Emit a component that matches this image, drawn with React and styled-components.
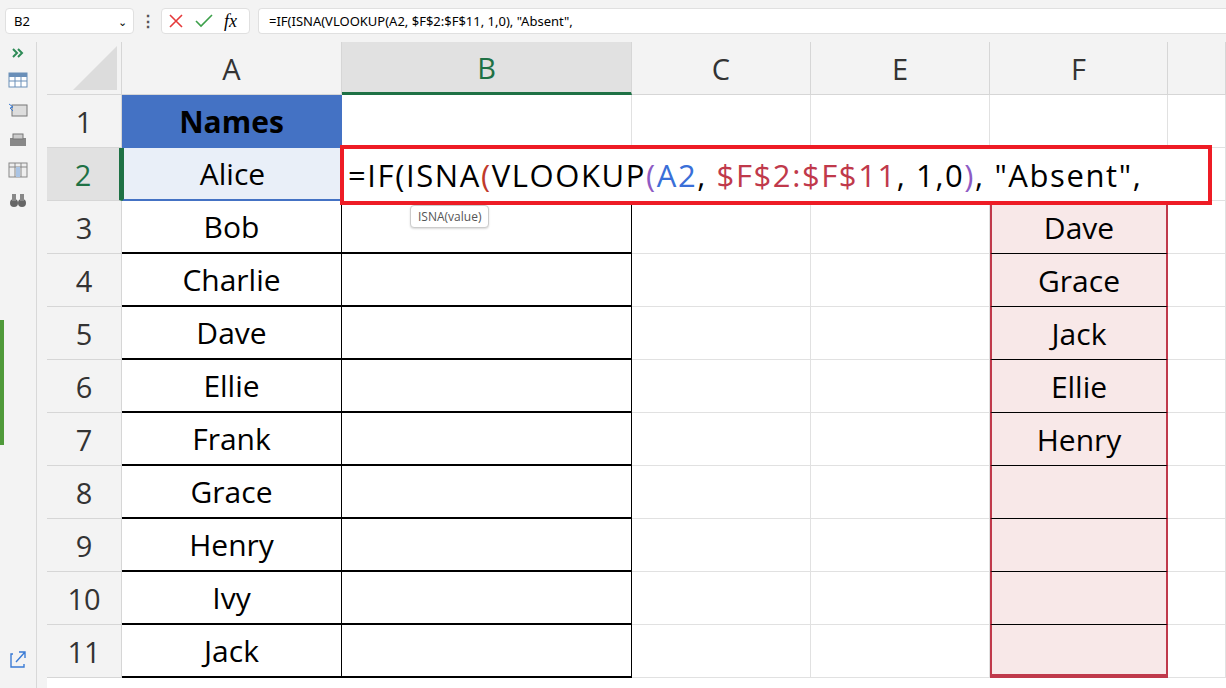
import React from "react";
import styled, { createGlobalStyle } from "styled-components";

const G = createGlobalStyle`
  body{margin:0;background:#fff;font-family:"Noto Sans","Open Sans",sans-serif;overflow:hidden;}
`;
const Page = styled.div`width:1226px;height:688px;display:flex;flex-direction:column;background:#f3f3f3;`;
const Bar = styled.div`height:42px;display:flex;align-items:center;gap:0;padding:0 0 0 5px;box-sizing:border-box;`;
const NameBox = styled.div`width:129px;height:26px;background:#fff;border:1px solid #e0e0e0;border-radius:4px;box-sizing:border-box;display:flex;align-items:center;justify-content:space-between;padding:0 6px 0 8px;font-size:13px;`;
const Dots = styled.div`width:27px;text-align:center;color:#555;font-size:16px;font-weight:bold;`;
const FxBox = styled.div`width:89px;height:26px;background:#fff;border:1px solid #e0e0e0;border-radius:4px;box-sizing:border-box;display:flex;align-items:center;gap:10px;padding:0 6px;`;
const Input = styled.div`flex:1;margin-left:8px;height:26px;background:#fff;border:1px solid #e0e0e0;border-right:none;border-radius:4px 0 0 4px;box-sizing:border-box;display:flex;align-items:center;padding-left:10px;font-size:13px;`;
const Body = styled.div`flex:1;display:flex;`;
const Side = styled.div`width:36px;display:flex;flex-direction:column;align-items:center;gap:14px;padding-top:6px;border-right:1px solid #d8d8d8;position:relative;margin-right:10px;`;
const GreenMark = styled.div`position:absolute;left:0;top:278px;width:4px;height:125px;background:#4f9a3a;`;
const Sheet = styled.div`flex:1;position:relative;background:#fff;display:grid;grid-template-columns:75px 220px 290px 179px 179px 178px 1fr;grid-template-rows:53px repeat(11,53px);align-content:start;font-family:"Open Sans","Noto Sans",sans-serif;`;
const ColH = styled.div`background:${p=>p.sel?"#e1e1e1":"#f3f3f3"};color:${p=>p.sel?"#1e7145":"#333"};border-right:1px solid #d6d6d6;border-bottom:${p=>p.sel?"3px solid #1e7145":"1px solid #d6d6d6"};display:flex;align-items:center;justify-content:center;font-size:29px;box-sizing:border-box;`;
const RowH = styled(ColH)`border-bottom:1px solid #d6d6d6;border-right:${p=>p.sel?"3px solid #1e7145":"1px solid #d6d6d6"};`;
const Corner = styled.div`background:#f3f3f3;border-right:1px solid #d6d6d6;border-bottom:1px solid #d6d6d6;position:relative;overflow:hidden;&:after{content:"";position:absolute;right:4px;bottom:4px;border-left:44px solid transparent;border-bottom:44px solid #dcdcdc;}`;
const Cell = styled.div`box-sizing:border-box;display:flex;align-items:center;justify-content:center;font-size:30px;color:#000;
  background:${p=>p.bg||"#fff"};
  border-right:${p=>p.br||"1px solid #e1e1e1"};
  border-bottom:${p=>p.bb||"1px solid #e1e1e1"};
  border-left:${p=>p.bl||"none"};
  font-weight:${p=>p.bold?700:400};`;
const Overlay = styled.div`position:absolute;left:293px;top:103px;width:872px;height:60px;border:4px solid #ee1c25;background:#fff;box-sizing:border-box;display:flex;align-items:center;padding-left:4px;font-size:31px;letter-spacing:1.6px;white-space:pre;font-family:"Open Sans","Noto Sans",sans-serif;`;
const Tip = styled.div`position:absolute;left:363px;top:163px;padding:2px 7px;border:1px solid #ccc;border-radius:4px;background:#fff;font-size:12px;color:#555;box-shadow:0 1px 2px rgba(0,0,0,.15);`;
const C = styled.span`color:${p=>p.c};`;

const A=["Alice","Bob","Charlie","Dave","Ellie","Frank","Grace","Henry","Ivy","Jack"];
const F=["","Dave","Grace","Jack","Ellie","Henry","","","",""];
const red="2px solid #c0394b";

export default function App(){
  const rows=[];
  for(let r=1;r<=11;r++){
    rows.push(<RowH key={"h"+r} sel={r===2}>{r}</RowH>);
    if(r===1){
      rows.push(<Cell key="a1" bg="#4472c4" bold br="1px solid #4472c4" bb="1px solid #4472c4">Names</Cell>);
      ["b","c","e","f","g"].forEach(k=>rows.push(<Cell key={k+r}/>));
      continue;
    }
    const blk="2px solid #000";
    rows.push(<Cell key={"a"+r} bg={r===2?"#e9eff8":undefined} bb={r===2?"2px solid #4472c4":blk} br="1px solid #000" bl={r===2?"2px solid #1e7145":undefined}>{A[r-2]}</Cell>);
    rows.push(<Cell key={"b"+r} bb={blk} br="1px solid #000"/>);
    rows.push(<Cell key={"c"+r}/>);
    rows.push(<Cell key={"e"+r}/>);
    if(r===2) rows.push(<Cell key="f2"/>);
    else rows.push(<Cell key={"f"+r} bg="#f8e8e8" bl={red} br={red} bb={r===11?"4px solid #c0394b":"1px solid #000"}>{F[r-2]}</Cell>);
    rows.push(<Cell key={"g"+r}/>);
  }
  return (<Page><G/>
    <Bar>
      <NameBox>B2<span style={{fontSize:11}}>⌄</span></NameBox>
      <Dots>⋮</Dots>
      <FxBox>
        <svg width="16" height="16" viewBox="0 0 16 16"><path d="M2 2L14 14M14 2L2 14" stroke="#e5393a" strokeWidth="1.6"/></svg>
        <svg width="20" height="16" viewBox="0 0 20 16"><path d="M2 8L7 13L18 2" stroke="#3ca04a" strokeWidth="1.6" fill="none"/></svg>
        <span style={{fontFamily:"Liberation Serif,serif",fontStyle:"italic",fontSize:18}}>fx</span>
      </FxBox>
      <Input>=IF(ISNA(VLOOKUP(A2, $F$2:$F$11, 1,0), "Absent",</Input>
    </Bar>
    <Body>
      <Side>
        <svg width="14" height="10" viewBox="0 0 14 10"><path d="M2 1l4 4-4 4M7 1l4 4-4 4" stroke="#2e8b57" strokeWidth="2" fill="none"/></svg>
        <svg width="20" height="16"><rect x="1" y="1" width="18" height="14" fill="#fff" stroke="#6a8fb8"/><rect x="1" y="1" width="18" height="4" fill="#6a8fb8"/><path d="M1 9h18M7 5v10M13 5v10" stroke="#6a8fb8"/></svg>
        <svg width="20" height="16"><rect x="4" y="3" width="15" height="11" fill="#ddd" stroke="#777"/><path d="M1 2l4 3-3 1 3 3" stroke="#3a7bd5" fill="none"/></svg>
        <svg width="20" height="16"><rect x="2" y="6" width="16" height="8" fill="#888"/><rect x="5" y="2" width="10" height="5" fill="#ccc" stroke="#777"/></svg>
        <svg width="20" height="16"><rect x="1" y="1" width="18" height="14" fill="#eee" stroke="#888"/><path d="M1 5h18M7 1v14M13 1v14" stroke="#888"/><rect x="8" y="5" width="4" height="10" fill="#aac4e4"/></svg>
        <svg width="20" height="16"><circle cx="6" cy="11" r="4" fill="#666"/><circle cx="14" cy="11" r="4" fill="#666"/><rect x="4" y="2" width="4" height="7" fill="#888"/><rect x="12" y="2" width="4" height="7" fill="#888"/></svg>
        <GreenMark/>
        <svg style={{position:"absolute",top:608}} width="16" height="18"><path d="M3 4H1v13h13v-3M6 12L15 2M9 2h6v6" stroke="#3a7bd5" fill="none" strokeWidth="1.4"/></svg>
      </Side>
      <Sheet>
        <Corner/>
        <ColH>A</ColH><ColH sel>B</ColH><ColH>C</ColH><ColH>E</ColH><ColH>F</ColH><ColH/>
        {rows}
        <Overlay>{"=IF(ISNA"}<C c="#c0392b">(</C>{"VLOOKUP"}<C c="#8e5bc4">(</C><C c="#3a6fd8">A2</C>{", "}<C c="#c0394b">$F$2:$F$11</C>{", 1,0"}<C c="#8e5bc4">)</C>{", \"Absent\","}</Overlay>
        <Tip>ISNA(value)</Tip>
      </Sheet>
    </Body>
  </Page>);
}
